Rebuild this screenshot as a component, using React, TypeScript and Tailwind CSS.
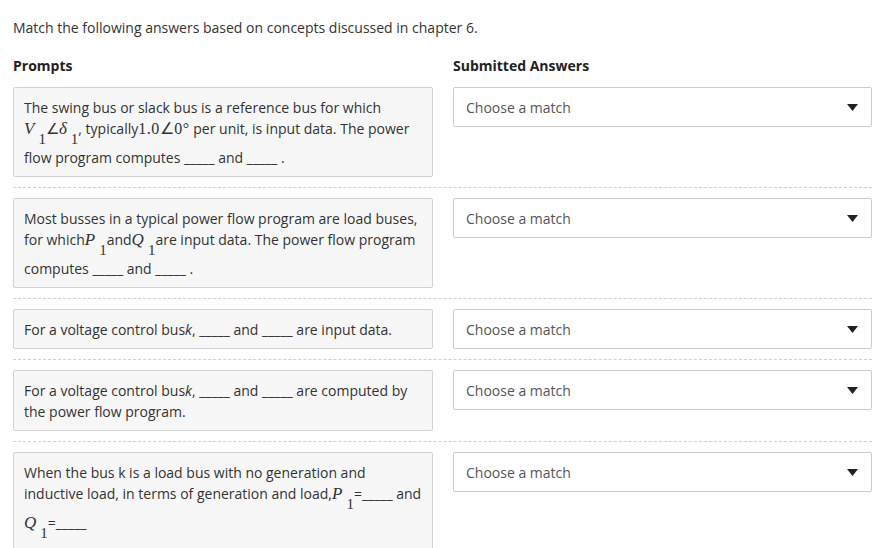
const font = "font-['Open_Sans','Liberation_Sans',sans-serif]";

// math variable with a lowered subscript 1
function Var({ v }: { v: string }) {
  return (
    <span className="font-['Liberation_Serif',serif] text-[17px]">
      <i>{v}</i>
      <span className="ml-[4px] align-[-10px] text-[15px] leading-none">1</span>
    </span>
  );
}

function Select() {
  return (
    <div className="flex h-10 items-center justify-between rounded-[2px] border border-[#cccccc] bg-white pl-3 pr-[13px] text-[#555555]">
      <span className="pt-px">Choose a match</span>
      <svg width="11" height="7" viewBox="0 0 11 7">
        <polygon points="0,0 11,0 5.5,7" fill="#222222" />
      </svg>
    </div>
  );
}

function Row({ children, first }: { children: React.ReactNode; first?: boolean }) {
  return (
    <div
      className={
        'grid grid-cols-[420px_1fr] items-start gap-5 border-b border-dashed border-[#d0d0d0] pb-[10px] ' +
        (first ? '' : 'pt-[10px]')
      }
    >
      <div className="rounded-[2px] border border-[#d2d2d2] bg-[#f7f7f7] px-[10px] py-[8.5px] leading-[21px]">
        {children}
      </div>
      <Select />
    </div>
  );
}

export default function App() {
  return (
    <div className={`${font} min-h-screen bg-white pl-[13px] pr-[20px] pt-[17px] text-[14px] leading-[22px] text-[#333333]`}>
      <p>Match the following answers based on concepts discussed in chapter 6.</p>

      <div className="mt-4 mb-[10px] grid grid-cols-[420px_1fr] gap-5 font-bold text-[#222222]">
        <div>Prompts</div>
        <div>Submitted Answers</div>
      </div>

      <Row first>
        The swing bus or slack bus is a reference bus for which{' '}
        <br />
        <Var v="V" />
        <span className="font-['Liberation_Serif',serif] text-[15px]">∠</span>
        <Var v="δ" />, typically
        <span className="font-['Liberation_Serif',serif] text-[16px] tracking-[0.5px]">1.0∠0°</span> per unit, is input
        data. The power flow program computes _____ and _____ .
      </Row>

      <Row>
        Most busses in a typical power flow program are load buses, for which
        <Var v="P" />
        and
        <Var v="Q" />
        are input data. The power flow program computes _____ and _____ .
      </Row>

      <Row>
        For a voltage control bus<i>k</i>, _____ and _____ are input data.
      </Row>

      <Row>
        For a voltage control bus<i>k</i>, _____ and _____ are computed by the power flow program.
      </Row>

      <Row>
        When the bus k is a load bus with no generation and inductive load, in terms of generation and load,
        <Var v="P" />
        =_____ and <Var v="Q" />
        =_____
      </Row>
    </div>
  );
}
